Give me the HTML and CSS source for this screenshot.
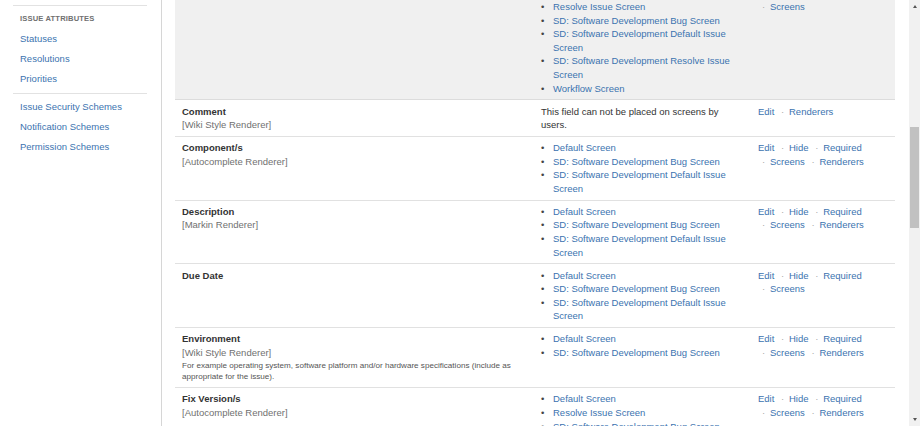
FILE: index.html
```html
<!DOCTYPE html>
<html>
<head>
<meta charset="utf-8">
<link rel="stylesheet" href="styles.css">
</head>
<body>
<div class="page">
  <nav class="sidebar">
    <div class="group first">
      <div class="heading">Issue Attributes</div>
      <a class="nav-link" href="#">Statuses</a>
      <a class="nav-link" href="#">Resolutions</a>
      <a class="nav-link" href="#">Priorities</a>
    </div>
    <div class="group">
      <a class="nav-link" href="#">Issue Security Schemes</a>
      <a class="nav-link" href="#">Notification Schemes</a>
      <a class="nav-link" href="#">Permission Schemes</a>
    </div>
  </nav>
  <main class="main">
    <div class="fields">
      <div class="row hover top">
        <div class="cell"></div>
        <div class="cell">
          <ul class="screens">
            <li><a href="#">Resolve Issue Screen</a></li>
            <li><a href="#">SD: Software Development Bug Screen</a></li>
            <li><a href="#">SD: Software Development Default Issue Screen</a></li>
            <li><a href="#">SD: Software Development Resolve Issue Screen</a></li>
            <li><a href="#">Workflow Screen</a></li>
          </ul>
        </div>
        <div class="cell">
          <ul class="ops"><li class="cont"><a href="#">Screens</a></li></ul>
        </div>
      </div>

      <div class="row">
        <div class="cell">
          <div class="name">Comment</div>
          <div class="renderer">[Wiki Style Renderer]</div>
        </div>
        <div class="cell"><div class="note">This field can not be placed on screens by users.</div></div>
        <div class="cell">
          <ul class="ops"><li><a href="#">Edit</a></li> <li><a href="#">Renderers</a></li></ul>
        </div>
      </div>

      <div class="row">
        <div class="cell">
          <div class="name">Component/s</div>
          <div class="renderer">[Autocomplete Renderer]</div>
        </div>
        <div class="cell">
          <ul class="screens">
            <li><a href="#">Default Screen</a></li>
            <li><a href="#">SD: Software Development Bug Screen</a></li>
            <li><a href="#">SD: Software Development Default Issue Screen</a></li>
          </ul>
        </div>
        <div class="cell">
          <ul class="ops"><li><a href="#">Edit</a></li> <li><a href="#">Hide</a></li> <li><a href="#">Required</a></li> <li><a href="#">Screens</a></li> <li><a href="#">Renderers</a></li></ul>
        </div>
      </div>

      <div class="row">
        <div class="cell">
          <div class="name">Description</div>
          <div class="renderer">[Markin Renderer]</div>
        </div>
        <div class="cell">
          <ul class="screens">
            <li><a href="#">Default Screen</a></li>
            <li><a href="#">SD: Software Development Bug Screen</a></li>
            <li><a href="#">SD: Software Development Default Issue Screen</a></li>
          </ul>
        </div>
        <div class="cell">
          <ul class="ops"><li><a href="#">Edit</a></li> <li><a href="#">Hide</a></li> <li><a href="#">Required</a></li> <li><a href="#">Screens</a></li> <li><a href="#">Renderers</a></li></ul>
        </div>
      </div>

      <div class="row">
        <div class="cell">
          <div class="name">Due Date</div>
        </div>
        <div class="cell">
          <ul class="screens">
            <li><a href="#">Default Screen</a></li>
            <li><a href="#">SD: Software Development Bug Screen</a></li>
            <li><a href="#">SD: Software Development Default Issue Screen</a></li>
          </ul>
        </div>
        <div class="cell">
          <ul class="ops"><li><a href="#">Edit</a></li> <li><a href="#">Hide</a></li> <li><a href="#">Required</a></li> <li><a href="#">Screens</a></li></ul>
        </div>
      </div>

      <div class="row">
        <div class="cell">
          <div class="name">Environment</div>
          <div class="renderer">[Wiki Style Renderer]</div>
          <div class="desc">For example operating system, software platform and/or hardware specifications (include as appropriate for the issue).</div>
        </div>
        <div class="cell">
          <ul class="screens">
            <li><a href="#">Default Screen</a></li>
            <li><a href="#">SD: Software Development Bug Screen</a></li>
          </ul>
        </div>
        <div class="cell">
          <ul class="ops"><li><a href="#">Edit</a></li> <li><a href="#">Hide</a></li> <li><a href="#">Required</a></li> <li><a href="#">Screens</a></li> <li><a href="#">Renderers</a></li></ul>
        </div>
      </div>

      <div class="row">
        <div class="cell">
          <div class="name">Fix Version/s</div>
          <div class="renderer">[Autocomplete Renderer]</div>
        </div>
        <div class="cell">
          <ul class="screens">
            <li><a href="#">Default Screen</a></li>
            <li><a href="#">Resolve Issue Screen</a></li>
            <li><a href="#">SD: Software Development Bug Screen</a></li>
          </ul>
        </div>
        <div class="cell">
          <ul class="ops"><li><a href="#">Edit</a></li> <li><a href="#">Hide</a></li> <li><a href="#">Required</a></li> <li><a href="#">Screens</a></li> <li><a href="#">Renderers</a></li></ul>
        </div>
      </div>
    </div>
  </main>
  <div class="scrollbar">
    <div class="arrow up"></div>
    <div class="thumb"></div>
    <div class="track-fill"></div>
    <div class="arrow down"></div>
  </div>
</div>
</body>
</html>
```
FILE: styles.css
```css
html, body {
  margin: 0;
  padding: 0;
  height: 426px;
  overflow: hidden;
  background: #fff;
}
body {
  font-family: "Liberation Sans", Arial, sans-serif;
  font-size: 9.5px;
  line-height: 13.6px;
  color: #333;
}
a {
  color: #3b73af;
  text-decoration: none;
}
.page {
  display: flex;
  height: 426px;
}
.sidebar {
  width: 161px;
  flex: none;
  border-right: 1px solid #d6d6d6;
  padding-top: 5px;
  box-sizing: content-box;
}
.group {
  margin: 0 14px 0 13px;
  border-top: 1px solid #e2e2e2;
  padding-top: 3px;
  padding-bottom: 4px;
  display: flex;
  flex-direction: column;
}
.group.first {
  padding-top: 6px;
}
.heading {
  padding-left: 7px;
  font-size: 7.6px;
  font-weight: bold;
  text-transform: uppercase;
  color: #707070;
  line-height: 13px;
  margin-bottom: 4px;
  letter-spacing: 0.15px;
}
.nav-link {
  padding-left: 7px;
  line-height: 20px;
}
.main {
  flex: none;
  width: 747px;
  padding-left: 13px;
  box-sizing: border-box;
}
.fields {
  width: 720px;
}
.row {
  display: grid;
  grid-template-columns: 359px 217px 144px;
  border-bottom: 1px solid #e1e1e1;
}
.row.hover {
  background: #f0f0f0;
  border-bottom-color: #dcdcdc;
}
.cell {
  padding: 4.4px 7px 4px;
  min-width: 0;
}
.row.top .cell {
  padding-top: 0;
}
.name {
  font-weight: bold;
  color: #333;
}
.renderer {
  color: #707070;
}
.desc {
  font-size: 8.1px;
  line-height: 11.7px;
  color: #555;
}
.note {
  color: #333;
}
.screens {
  list-style: none;
  margin: 0;
  padding: 0;
}
.screens li {
  padding-left: 12px;
  text-indent: -12px;
}
.screens li::before {
  content: "\2022";
  display: inline-block;
  width: 12px;
  text-indent: 0;
  color: #444;
}
.ops {
  list-style: none;
  margin: 0;
  padding: 0;
}
.ops li {
  display: inline;
}
.ops li + li::before,
.ops li.cont::before {
  content: "\00B7";
  color: #aaa;
  margin: 0 4.8px 0 4px;
}
.scrollbar {
  flex: none;
  width: 11px;
  background: #f1f1f1;
  display: flex;
  flex-direction: column;
  align-items: center;
  margin-left: auto;
}
.arrow {
  width: 0;
  height: 0;
  border-left: 2.5px solid transparent;
  border-right: 2.5px solid transparent;
}
.arrow.up {
  margin-top: 5px;
  border-bottom: 3px solid #555;
}
.arrow.down {
  margin-bottom: 5px;
  border-top: 3px solid #555;
}
.thumb {
  width: 9px;
  height: 101px;
  margin-top: 119px;
  background: #c1c1c1;
}
.track-fill {
  flex: 1;
}
```
